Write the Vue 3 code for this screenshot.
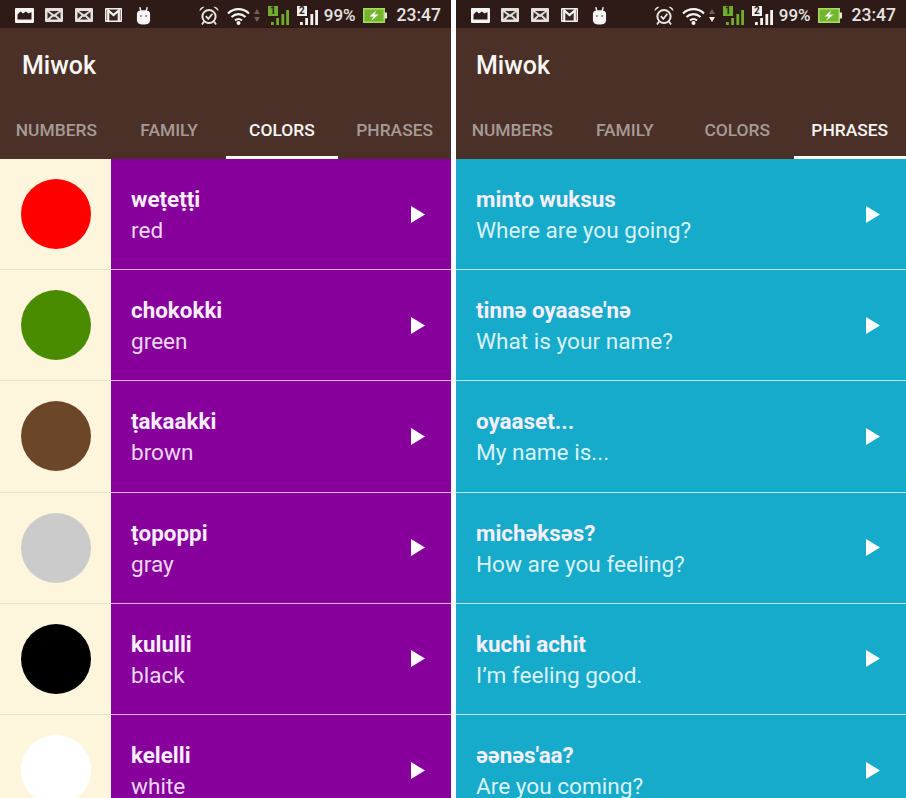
<script setup>
const tabs = ['NUMBERS', 'FAMILY', 'COLORS', 'PHRASES']
const bars = [
  { x: 3, h: 3 },
  { x: 8.2, h: 7 },
  { x: 13.4, h: 11 },
  { x: 18.2, h: 15 }
]
const panels = [
  {
    id: 'colors', active: 'COLORS', theme: 'purple', wifiDown: false,
    rows: [
      { miwok: 'weṭeṭṭi', en: 'red', color: '#ff0000' },
      { miwok: 'chokokki', en: 'green', color: '#4a8c00' },
      { miwok: 'ṭakaakki', en: 'brown', color: '#6c4628' },
      { miwok: 'ṭopoppi', en: 'gray', color: '#cbcbcb' },
      { miwok: 'kululli', en: 'black', color: '#000000' },
      { miwok: 'kelelli', en: 'white', color: '#ffffff' }
    ]
  },
  {
    id: 'phrases', active: 'PHRASES', theme: 'teal', wifiDown: true,
    rows: [
      { miwok: 'minto wuksus', en: 'Where are you going?' },
      { miwok: "tinnə oyaase'nə", en: 'What is your name?' },
      { miwok: 'oyaaset...', en: 'My name is...' },
      { miwok: 'michəksəs?', en: 'How are you feeling?' },
      { miwok: 'kuchi achit', en: 'I’m feeling good.' },
      { miwok: "əənəs'aa?", en: 'Are you coming?' }
    ]
  }
]
</script>

<template>
  <div class="screens">
    <section v-for="p in panels" :key="p.id" class="phone" :class="p.theme">
      <div class="status">
        <div class="notifs">
          <svg class="n-pic" width="19" height="15" viewBox="0 0 19 15"><rect width="19" height="15" rx="1" fill="#f6f4f2"/><path d="M2.5 11.5V6.5L5.5 3.5 8 5.5 11 3.5 13.5 5.5 16.5 4V11.5Z" fill="#2e1b17"/></svg>
          <svg class="n-mail" width="18" height="14" viewBox="0 0 18 14"><rect width="18" height="14" rx="1" fill="#e4e0de"/><path d="M4 3H14L9 6.6Z" fill="#3c2a26"/><path d="M2.5 4 6.6 7.3 2.5 11ZM15.5 4 11.4 7.3 15.5 11Z" fill="#3c2a26"/><path d="M5 11.5 8 8.6 9 9.3 10 8.6 13 11.5Z" fill="#3c2a26"/></svg>
          <svg class="n-mail" width="18" height="14" viewBox="0 0 18 14"><rect width="18" height="14" rx="1" fill="#e4e0de"/><path d="M4 3H14L9 6.6Z" fill="#3c2a26"/><path d="M2.5 4 6.6 7.3 2.5 11ZM15.5 4 11.4 7.3 15.5 11Z" fill="#3c2a26"/><path d="M5 11.5 8 8.6 9 9.3 10 8.6 13 11.5Z" fill="#3c2a26"/></svg>
          <svg class="n-gmail" width="17" height="14" viewBox="0 0 17 14"><rect width="17" height="14" rx="1" fill="#f4f2f0"/><rect x="1.5" y="1.5" width="14" height="11" fill="#3a2723"/><path d="M3.2 13V2.5L8.5 7 13.8 2.5V13" fill="none" stroke="#f4f2f0" stroke-width="2.2"/></svg>
          <svg class="n-bot" width="15" height="19" viewBox="0 0 16 19"><path d="M4 0.5 5.2 5M12 0.5 10.8 5" stroke="#f4f2f0" stroke-width="1.5" fill="none"/><path d="M1 8C1 5 3.5 4 8 4S15 5 15 8V14.5C15 17.5 12.5 19 8 19S1 17.5 1 14.5Z" fill="#f8f6f4"/><circle cx="5.2" cy="10" r="1" fill="#7d706c"/><circle cx="10.8" cy="10" r="1" fill="#7d706c"/></svg>
        </div>
        <div class="system">
          <svg class="alarm" width="20" height="19" viewBox="0 0 20 19"><circle cx="10" cy="10.5" r="6.6" fill="none" stroke="#e8e6e4" stroke-width="2"/><path d="M6.8 10.2 9.3 12.8 13.4 7.8" fill="none" stroke="#e8e6e4" stroke-width="1.8"/><path d="M0.5 5.2C0.5 2.2 2.8 0.4 5.6 0.8ZM19.5 5.2C19.5 2.2 17.2 0.4 14.4 0.8Z" fill="#e8e6e4"/><path d="M5 15.5 3 18.5M15 15.5 17 18.5" stroke="#e8e6e4" stroke-width="1.8"/></svg>
          <svg class="wifi" width="23" height="19" viewBox="0 0 23 19"><path d="M1 7.5C6.8 1.7 16.2 1.7 22 7.5M4.5 11C8.5 7.2 14.5 7.2 18.5 11M8 14.3C10 12.8 13 12.8 15 14.3" fill="none" stroke="#f6f4f2" stroke-width="2.1"/><circle cx="11.5" cy="16.9" r="2" fill="#f6f4f2"/></svg>
          <svg class="arrows" width="6" height="13" viewBox="0 0 6 13"><path d="M3 0 6 5H0Z" fill="#6e5f5a"/><path d="M3 13 0 8H6Z" :fill="p.wifiDown ? '#f2f0ee' : '#6e5f5a'"/></svg>
          <div class="sim green">
            <span class="simnum">1</span>
            <svg width="21" height="19" viewBox="0 0 21 19"><rect v-for="b in bars" :key="b.x" :x="b.x" :y="19 - b.h" width="2.8" :height="b.h" fill="currentColor"/></svg>
          </div>
          <div class="sim white">
            <span class="simnum">2</span>
            <svg width="21" height="19" viewBox="0 0 21 19"><rect v-for="b in bars" :key="b.x" :x="b.x" :y="19 - b.h" width="2.8" :height="b.h" fill="currentColor"/></svg>
          </div>
          <span class="pct">99%</span>
          <svg class="batt" width="24" height="15" viewBox="0 0 24 15"><rect x="0.8" y="0.8" width="20.4" height="13.4" fill="#74b52f" stroke="#a6dc5a" stroke-width="1.6"/><rect x="21.5" y="4.5" width="2.5" height="6" fill="#e6e6dc"/><path d="M13.5 2.2 6.5 8.5H10.5L8.2 12.8 15.5 6.5H11.2Z" fill="#fff"/></svg>
          <span class="clock">23:47</span>
        </div>
      </div>

      <header class="appbar">Miwok</header>

      <nav class="tabs">
        <div v-for="t in tabs" :key="t" class="tab" :class="{ on: t === p.active }">{{ t }}</div>
      </nav>

      <ul class="list">
        <li v-for="r in p.rows" :key="r.miwok" class="row">
          <div v-if="r.color" class="swatch">
            <span class="dot" :style="{ background: r.color }"></span>
          </div>
          <div class="body">
            <div class="words">
              <div class="miwok">{{ r.miwok }}</div>
              <div class="en">{{ r.en }}</div>
            </div>
            <svg class="play" width="14" height="17" viewBox="0 0 14 17"><path d="M0 0 14 8.5 0 17Z" fill="#fff"/></svg>
          </div>
        </li>
      </ul>
    </section>
  </div>
</template>

<style scoped>
.screens {
  display: grid;
  grid-template-columns: 451px 450px;
  column-gap: 5px;
  height: 798px;
  overflow: hidden;
  background: #fff;
  font-family: Roboto, "Liberation Sans", sans-serif;
}
.phone { display: flex; flex-direction: column; min-width: 0; }

.status {
  height: 28px;
  flex: none;
  box-sizing: border-box;
  padding: 2px 10px 0 15px;
  background: #2e1b17;
  color: #f0eeec;
  display: flex;
  align-items: center;
  justify-content: space-between;
}
.notifs { display: flex; align-items: center; }
.n-pic { margin-right: 11px; }
.n-mail { margin-right: 12px; }
.n-gmail { margin-right: 14px; }
.system { display: flex; align-items: center; }
.alarm { margin-right: 8px; }
.wifi { margin-right: 4px; }
.arrows { margin-right: 8px; }
.sim { position: relative; width: 21px; height: 19px; margin-right: 8px; }
.sim svg { display: block; }
.sim.white { margin-right: 6px; }
.sim.green { color: #6fae2c; }
.sim.white { color: #f4f2f0; }
.simnum {
  position: absolute;
  left: 0;
  top: 0;
  width: 10px;
  height: 10px;
  font-size: 10px;
  line-height: 10px;
  font-weight: 700;
  text-align: center;
  color: #2e1b17;
}
.sim.green .simnum { background: #6fae2c; }
.sim.white .simnum { background: #f4f2f0; }
.pct { font-size: 17px; font-weight: 500; margin-right: 7px; color: #e6e4e2; }
.batt { margin-right: 10px; }
.clock { font-size: 17.5px; font-weight: 500; color: #e6e4e2; }

.appbar {
  height: 74px;
  flex: none;
  box-sizing: border-box;
  padding: 2px 0 0 22px;
  background: #4b3028;
  color: #f8f6f4;
  font-size: 25px;
  font-weight: 500;
  line-height: 72px;
}
.teal .appbar { padding-left: 20px; }
.tabs {
  height: 57px;
  flex: none;
  background: #4b3028;
  display: grid;
  grid-template-columns: repeat(4, 1fr);
}
.tab {
  font-size: 17.4px;
  font-weight: 500;
  color: #a69a96;
  text-align: center;
  line-height: 56px;
  height: 57px;
  box-sizing: border-box;
  border-bottom: 3px solid transparent;
  white-space: nowrap;
}
.tab.on { color: #f8f6f4; border-bottom-color: #fff; }

.list { list-style: none; margin: 0; padding: 0; flex: 1; }
.purple .list { background: #88009c; }
.teal .list { background: #16abca; }
.row {
  height: 111.2px;
  display: flex;
  box-sizing: border-box;
}
.swatch {
  width: 111px;
  flex: none;
  background: #fdf5dc;
  border-bottom: 1px solid #e9e0c4;
  display: flex;
  align-items: center;
  justify-content: center;
  box-sizing: border-box;
}
.dot { width: 70px; height: 70px; border-radius: 50%; }
.body {
  flex: 1;
  display: flex;
  align-items: center;
  justify-content: space-between;
  padding: 0 26px 0 20px;
  border-bottom: 1px solid rgba(255, 255, 255, 0.7);
  color: #fff;
}
.words { display: flex; flex-direction: column; gap: 4px; padding-top: 2px; }
.miwok { font-size: 22.4px; font-weight: 700; line-height: 28px; color: #f6eefa; }
.en { font-size: 22.6px; line-height: 28px; color: rgba(255, 255, 255, 0.86); }
</style>

<style>
html, body { margin: 0; overflow: hidden; background: #fff; }
</style>
